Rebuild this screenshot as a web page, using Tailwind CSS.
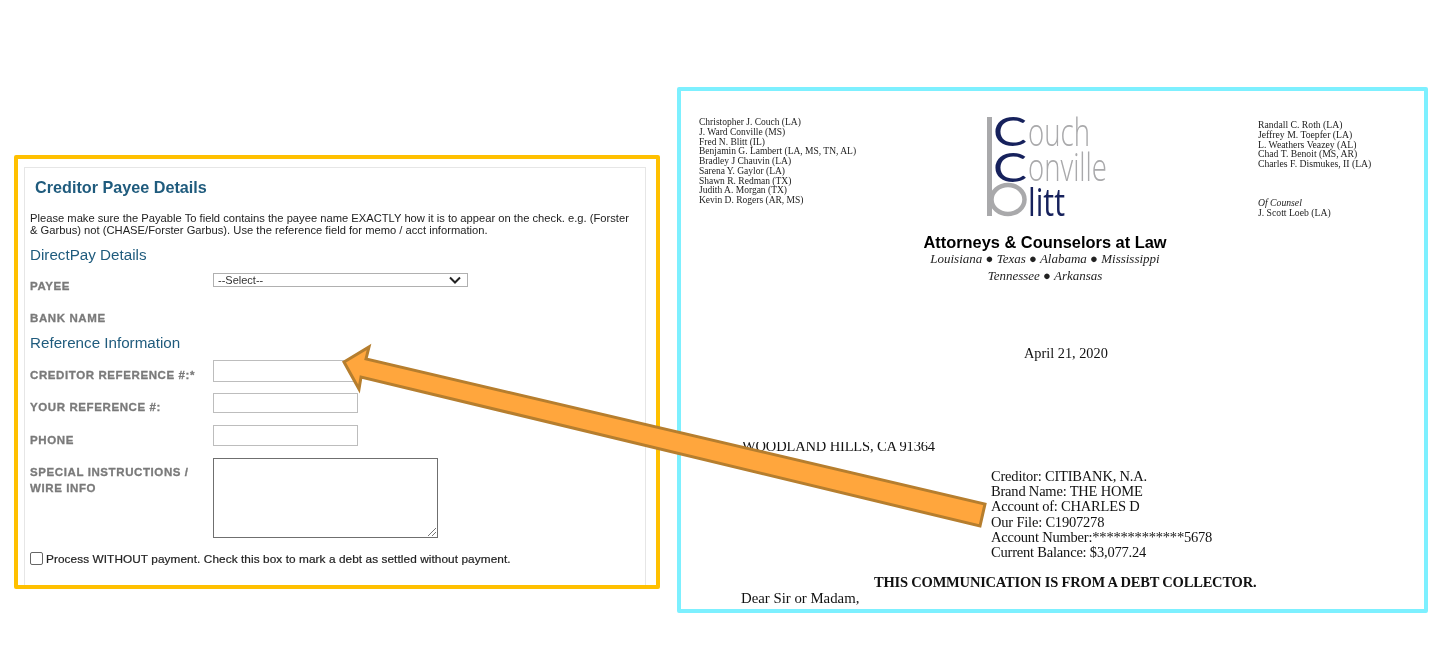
<!DOCTYPE html>
<html>
<head>
<meta charset="utf-8">
<script src="https://cdn.jsdelivr.net/npm/@tailwindcss/browser@4"></script>
</head>
<body class="bg-white">
<div class="relative w-[1435px] h-[661px] overflow-hidden bg-white blur-[0.3px] font-['Liberation_Sans',Arial,sans-serif]">
  <div class="flex items-start pl-[14px] pt-[87px] gap-[17px]">
    <!-- left card -->
    <section class="mt-[68px] w-[646px] h-[434px] border-[4px] border-[#ffc000] rounded-[2px] pl-[6px] pr-[10px] pt-[8px]">
      <div class="h-full border border-b-0 border-[#e6e6e6] pl-[5px]">
        <div class="h-[38px] flex items-center pl-[5px] text-[16.2px] font-bold text-[#1f5b7d]">Creditor Payee Details</div>
        <p class="mt-[6px] text-[11.2px] leading-[12px] text-[#222] w-[606px]">Please make sure the Payable To field contains the payee name EXACTLY how it is to appear on the check. e.g. (Forster &amp; Garbus) not (CHASE/Forster Garbus). Use the reference field for memo / acct information.</p>
        <div class="mt-[9px] h-[20px] leading-[20px] text-[15.2px] text-[#1f5b7d]">DirectPay Details</div>
        <div class="mt-[8px] h-[32px] flex">
          <div class="w-[183px] pt-[6px] text-[11.5px] leading-[14px] font-bold text-[#7a7a7a] tracking-[0.6px] [-webkit-text-stroke:0.3px_#7a7a7a]">PAYEE</div>
          <div class="w-[255px] h-[14px] border border-[#b0b0b0] flex items-center justify-between pl-[4px] pr-[6px] text-[11px] text-[#333]">
            <span>--Select--</span>
            <svg class="w-[12px] h-[8px]" viewBox="0 0 12 8" fill="none"><path d="M1 1.5 L6 6.5 L11 1.5" stroke="#222" stroke-width="2"/></svg>
          </div>
        </div>
        <div class="h-[28px] pt-[6px] text-[11.5px] leading-[14px] font-bold text-[#7a7a7a] tracking-[0.6px] [-webkit-text-stroke:0.3px_#7a7a7a]">BANK NAME</div>
        <div class="h-[20px] leading-[20px] text-[15.2px] text-[#1f5b7d]">Reference Information</div>
        <div class="mt-[7px] h-[33px] flex">
          <div class="w-[183px] pt-[8px] text-[11.5px] leading-[14px] font-bold text-[#7a7a7a] tracking-[0.6px] [-webkit-text-stroke:0.3px_#7a7a7a]">CREDITOR REFERENCE #:*</div>
          <div class="w-[145px] h-[22px] border border-[#bdbdbd]"></div>
        </div>
        <div class="h-[32px] flex">
          <div class="w-[183px] pt-[7px] text-[11.5px] leading-[14px] font-bold text-[#7a7a7a] tracking-[0.6px] [-webkit-text-stroke:0.3px_#7a7a7a]">YOUR REFERENCE #:</div>
          <div class="w-[145px] h-[20px] border border-[#bdbdbd]"></div>
        </div>
        <div class="h-[33px] flex">
          <div class="w-[183px] pt-[8px] text-[11.5px] leading-[14px] font-bold text-[#7a7a7a] tracking-[0.6px] [-webkit-text-stroke:0.3px_#7a7a7a]">PHONE</div>
          <div class="w-[145px] h-[21px] border border-[#bdbdbd]"></div>
        </div>
        <div class="h-[80px] flex">
          <div class="w-[183px] pt-[6px] text-[11.5px] leading-[16px] font-bold text-[#7a7a7a] tracking-[0.6px] [-webkit-text-stroke:0.3px_#7a7a7a]">SPECIAL INSTRUCTIONS /<br>WIRE INFO</div>
          <div class="relative w-[225px] h-[80px] border border-[#6f6f6f]">
            <svg class="absolute right-0 bottom-0 w-[10px] h-[10px]" viewBox="0 0 10 10" fill="none"><path d="M1 9 L9 1 M5 9 L9 5" stroke="#666" stroke-width="0.9"/></svg>
          </div>
        </div>
        <div class="mt-[14px] flex items-center h-[13px]">
          <div class="w-[13px] h-[13px] border border-[#666] rounded-[2px] bg-white"></div>
          <span class="ml-[3px] text-[11.8px] text-[#222] [-webkit-text-stroke:0.2px_#222] tracking-[0.08px] relative top-[1px]">Process WITHOUT payment. Check this box to mark a debt as settled without payment.</span>
        </div>
      </div>
    </section>

    <!-- right card: letter -->
    <section class="w-[751px] h-[526px] border-[4px] border-[#7df0ff] rounded-[2px] font-['Liberation_Serif','Times_New_Roman',serif] text-[#111]">
      <div class="flex h-[141px]">
        <div class="w-[300px] pl-[18px] pt-[27px] text-[9.5px] leading-[9.75px] text-[#222]">
          <div>Christopher J. Couch (LA)</div>
          <div>J. Ward Conville (MS)</div>
          <div>Fred N. Blitt (IL)</div>
          <div>Benjamin G. Lambert (LA, MS, TN, AL)</div>
          <div>Bradley J Chauvin (LA)</div>
          <div>Sarena Y. Gaylor (LA)</div>
          <div>Shawn R. Redman (TX)</div>
          <div>Judith A. Morgan (TX)</div>
          <div>Kevin D. Rogers (AR, MS)</div>
        </div>
        <svg class="w-[135px] h-[141px] shrink-0" viewBox="981 91 135 141" fill="none">
          <rect x="987" y="117" width="5" height="99" fill="#a9a9ab"/>
          <ellipse cx="1008" cy="199.5" rx="16.5" ry="14.5" stroke="#a9a9ab" stroke-width="4.5"/>
          <text x="993" y="146" font-family="Lato" font-weight="400" font-size="41" fill="#16215c" textLength="34" lengthAdjust="spacingAndGlyphs">C</text>
          <text x="993" y="182" font-family="Lato" font-weight="400" font-size="41" fill="#16215c" textLength="34" lengthAdjust="spacingAndGlyphs">C</text>
          <text x="1028" y="146" font-family="Open Sans" font-weight="300" font-size="38" fill="#a9a9ab" textLength="62" lengthAdjust="spacingAndGlyphs">ouch</text>
          <text x="1028" y="181" font-family="Open Sans" font-weight="300" font-size="38" fill="#a9a9ab" textLength="79" lengthAdjust="spacingAndGlyphs">onville</text>
          <text x="1028" y="216" font-family="Open Sans" font-weight="400" font-size="38" fill="#16215c" textLength="37" lengthAdjust="spacingAndGlyphs">litt</text>
        </svg>
        <div class="ml-[142px] pt-[29px] text-[9.7px] leading-[9.75px] text-[#222]">
          <div>Randall C. Roth (LA)</div>
          <div>Jeffrey M. Toepfer (LA)</div>
          <div>L. Weathers Veazey (AL)</div>
          <div>Chad T. Benoit (MS, AR)</div>
          <div>Charles F. Dismukes, II (LA)</div>
          <div class="mt-[29px] italic">Of Counsel</div>
          <div>J. Scott Loeb (LA)</div>
        </div>
      </div>
      <div class="w-[728px] text-center font-['Liberation_Sans',Arial,sans-serif] font-bold text-[16.4px] leading-[20px] text-black">Attorneys &amp; Counselors at Law</div>
      <div class="w-[728px] text-center italic text-[13px] leading-[17px] mt-[-2px] text-[#222]">Louisiana ● Texas ● Alabama ● Mississippi<br>Tennessee ● Arkansas</div>
      <div class="ml-[343px] mt-[60px] text-[14.3px] leading-[18px]">April 21, 2020</div>
      <div class="ml-[61px] mt-[80px] h-[11px] overflow-hidden text-[14.5px] leading-[14px] tracking-[-0.15px]"><div class="mt-[-3px]">WOODLAND HILLS, CA 91364</div></div>
      <div class="ml-[310px] mt-[16px] text-[14.5px] leading-[15.2px] tracking-[-0.2px]">
        <div>Creditor: CITIBANK, N.A.</div>
        <div>Brand Name: THE HOME</div>
        <div>Account of: CHARLES D</div>
        <div>Our File: C1907278</div>
        <div>Account Number:*************5678</div>
        <div>Current Balance: $3,077.24</div>
      </div>
      <div class="ml-[193px] mt-[14px] text-[14.5px] leading-[16px] font-bold tracking-[-0.2px]">THIS COMMUNICATION IS FROM A DEBT COLLECTOR.</div>
      <div class="ml-[60px] text-[14.8px] leading-[16px]">Dear Sir or Madam,</div>
    </section>
  </div>

  <!-- arrow overlay -->
  <svg class="absolute left-0 top-0 w-[1435px] h-[661px] pointer-events-none" viewBox="0 0 1435 661" fill="none">
    <polygon points="344,362 369,347 366,359 985,504 980,526 361,377 359,389" fill="#ffa63d" stroke="#b67e2e" stroke-width="3" stroke-linejoin="miter"/>
  </svg>
</div>
</body>
</html>
